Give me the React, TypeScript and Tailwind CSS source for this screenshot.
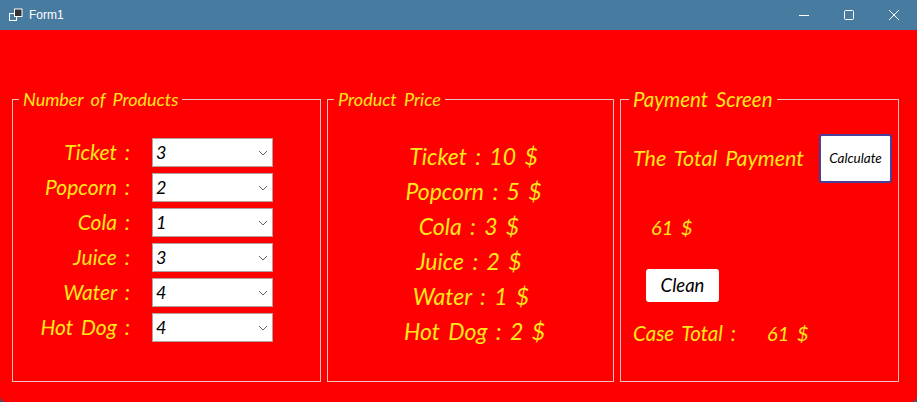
const hand = "font-['Lato','Open_Sans',sans-serif] italic [word-spacing:3px]";

const counts = [
  { label: "Ticket :", value: "3" },
  { label: "Popcorn :", value: "2" },
  { label: "Cola :", value: "1" },
  { label: "Juice :", value: "3" },
  { label: "Water :", value: "4" },
  { label: "Hot Dog :", value: "4" },
];

const prices = [
  { text: "Ticket : 10 $", cls: "ml-[6px]" },
  { text: "Popcorn : 5 $", cls: "ml-[6px]" },
  { text: "Cola : 3 $", cls: "ml-[-3px]" },
  { text: "Juice : 2 $", cls: "ml-[-3px]" },
  { text: "Water : 1 $", cls: "ml-[1px]" },
  { text: "Hot Dog : 2 $", cls: "ml-[8px]" },
];

function TitleBar() {
  return (
    <div className="flex h-[30px] items-center justify-between bg-[#487ba0] text-white">
      <div className="flex items-center">
        <svg className="ml-[9px] h-[14px] w-[14px]" viewBox="0 0 14 14" fill="none" stroke="currentColor">
          <rect x="0.5" y="5.5" width="7" height="7" />
          <rect x="5.5" y="1" width="7.5" height="7.5" fill="#333" />
        </svg>
        <span className="ml-[6px] font-['Liberation_Sans',sans-serif] text-[12px]">Form1</span>
      </div>
      <div className="mr-[17px] flex items-center gap-[33px]">
        <svg className="h-[12px] w-[12px]" viewBox="0 0 12 12" stroke="currentColor" fill="none">
          <path d="M1 6.5h10" />
        </svg>
        <svg className="h-[12px] w-[12px]" viewBox="0 0 12 12" stroke="currentColor" fill="none">
          <rect x="1.5" y="1.5" width="9" height="9" rx="1" />
        </svg>
        <svg className="h-[12px] w-[12px]" viewBox="0 0 12 12" stroke="currentColor" fill="none">
          <path d="M1 1l10 10M11 1L1 11" />
        </svg>
      </div>
    </div>
  );
}

function Group({ title, titleClass, width, children }: { title: string; titleClass: string; width: string; children: React.ReactNode }) {
  return (
    <div className={`relative h-[283px] border border-[#e6c4c4] ${width}`}>
      <span className={`absolute top-[-12px] left-[6px] bg-[#ff0000] px-[4px] leading-[22px] text-[#ffe81a] ${hand} ${titleClass}`}>
        {title}
      </span>
      {children}
    </div>
  );
}

function Combo({ value }: { value: string }) {
  return (
    <div className="flex h-[29px] w-[121px] items-center justify-between border border-[#b4a0a0] bg-white pr-[4px] pl-[3px]">
      <span className={`text-[18px] text-black ${hand}`}>{value}</span>
      <svg className="h-[10px] w-[10px]" viewBox="0 0 10 10" fill="none" stroke="#666">
        <path d="M1 3l4 4 4-4" />
      </svg>
    </div>
  );
}

export default function App() {
  return (
    <div className="h-[402px] w-[917px] overflow-hidden bg-[#4a4f6a]">
      <div className="h-[402px] overflow-hidden rounded-b-[6px] bg-[#ff0000]">
        <TitleBar />
        <div className="flex gap-[6px] pt-[69px] pl-[12px]">
          <Group title="Number of Products" titleClass="text-[18px]" width="w-[309px]">
            <div className="flex flex-col gap-[6px] pt-[38px]">
              {counts.map((c) => (
                <div key={c.label} className="flex items-center">
                  <span className={`w-[117px] pb-[2px] text-right text-[21px] leading-[27px] text-[#ffe81a] ${hand}`}>{c.label}</span>
                  <div className="ml-[22px]">
                    <Combo value={c.value} />
                  </div>
                </div>
              ))}
            </div>
          </Group>

          <Group title="Product Price" titleClass="text-[18px]" width="w-[287px]">
            <div className="flex flex-col items-center gap-[7px] pt-[42px]">
              {prices.map((p) => (
                <span key={p.text} className={`h-[28px] text-[23px] leading-[28px] text-[#ffe81a] ${hand} ${p.cls}`}>
                  {p.text}
                </span>
              ))}
            </div>
          </Group>

          <Group title="Payment Screen" titleClass="text-[20.5px] left-[8px]" width="w-[279px]">
            <div className="flex flex-col pl-[12px]">
              <div className="flex items-center pt-[34px]">
                <span className={`w-[186px] text-[21.5px] text-[#ffe81a] ${hand}`}>The Total Payment</span>
                <button className="h-[49px] w-[73px] rounded-[3px] border-2 border-[#4a3f9a] bg-white text-[13.5px] text-black">
                  <span className={hand}>Calculate</span>
                </button>
              </div>
              <span className={`mt-[30px] ml-[18px] h-[28px] text-[20px] leading-[28px] text-[#ffe81a] ${hand}`}>61 $</span>
              <button className="mt-[28px] ml-[13px] h-[33px] w-[73px] rounded-[3px] bg-white text-[18.5px] text-black">
                <span className={hand}>Clean</span>
              </button>
              <div className={`mt-[16px] flex text-[20.5px] leading-[30px] text-[#ffe81a] ${hand}`}>
                <span className="w-[134px]">Case Total :</span>
                <span className="text-[20px]">61 $</span>
              </div>
            </div>
          </Group>
        </div>
      </div>
    </div>
  );
}
